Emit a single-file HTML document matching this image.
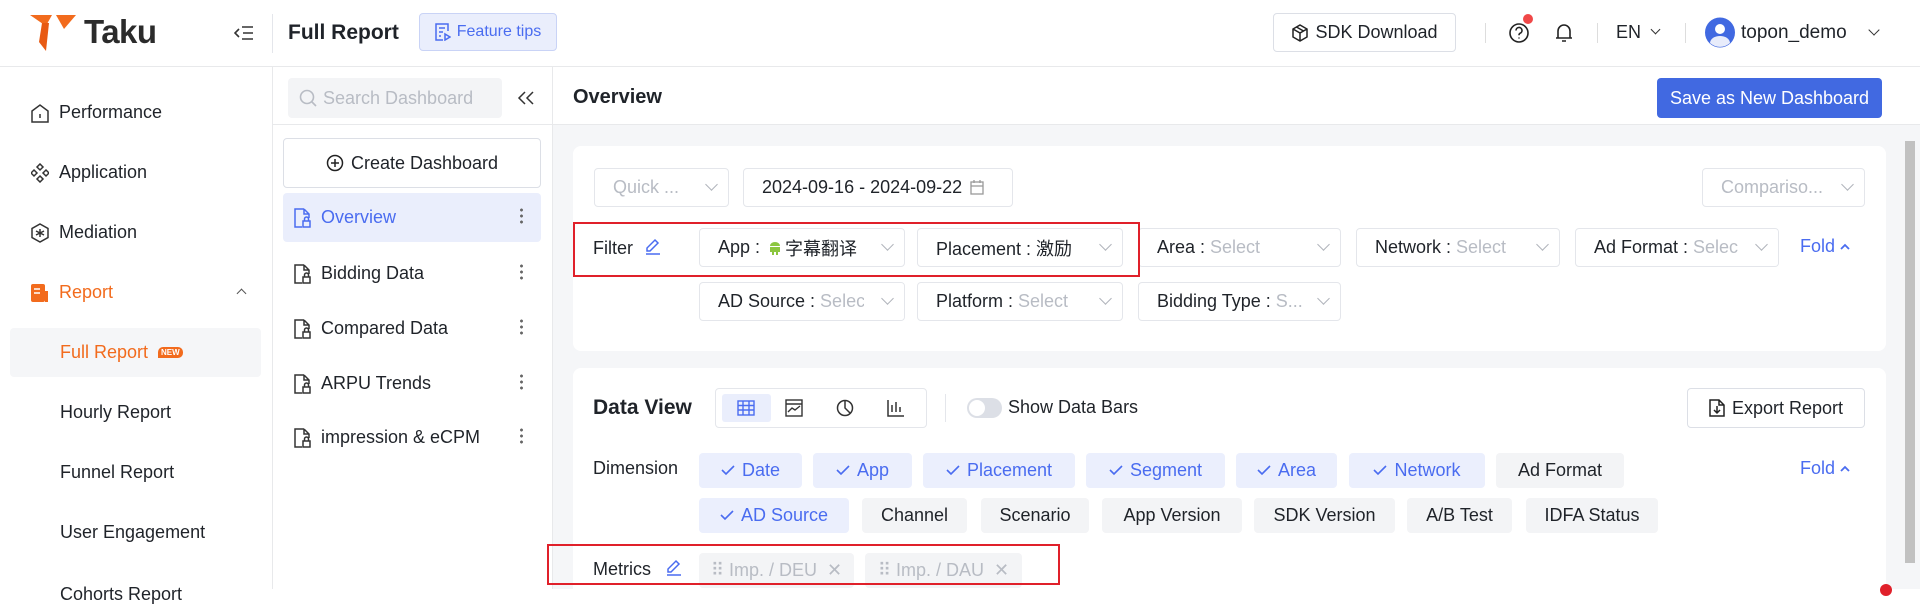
<!DOCTYPE html>
<html><head><meta charset="utf-8"><style>
*{box-sizing:border-box;margin:0;padding:0}
body{width:1920px;height:589px;overflow:hidden;background:#fff;font-family:"Liberation Sans","Noto Sans CJK SC",sans-serif;color:#1f2329;position:relative;font-size:18px}
.a{position:absolute}
.vc{display:flex;align-items:center}
.btn{border:1px solid #dcdfe6;border-radius:4px;background:#fff;display:flex;align-items:center;justify-content:center}
.sel{position:absolute;height:39px;border:1px solid #e4e6eb;border-radius:4px;background:#fff;display:flex;align-items:center;padding-left:18px;font-size:18px;white-space:nowrap;overflow:hidden}
.sel .ph{color:#b8bcc4}
.sel .cv{position:absolute;right:12px;top:11px;width:9px;height:9px;border-right:1.5px solid #b0b4bb;border-bottom:1.5px solid #b0b4bb;transform:rotate(45deg)}
.sel .mask{position:absolute;right:0;top:0;bottom:0;width:40px;background:#fff}
.chip{position:absolute;height:35px;border-radius:4px;display:flex;align-items:center;justify-content:center;font-size:18px;background:#f3f4f6;color:#1f2329}
.chip.on{background:#ebeffd;color:#4a6cf0}
.chip.on svg{margin-right:7px}
.nav{position:absolute;left:31px;font-size:18px;display:flex;align-items:center}
.nav svg{margin-right:10px}
.db{position:absolute;left:283px;width:258px;height:49px;display:flex;align-items:center;padding-left:11px;font-size:18px;border-radius:4px}
.db svg{margin-right:10px}
.db .dots{position:absolute;right:18px;top:14px;width:3px;height:18px;background:radial-gradient(circle,#666 1.3px,transparent 1.6px) 0 0/3px 6px}
.fold{position:absolute;left:1800px;color:#4a6cf0;display:flex;align-items:center}
</style></head><body>
<!-- header -->
<div class="a" style="left:0;top:0;width:1920px;height:67px;border-bottom:1px solid #e8e9eb"></div>
<svg class="a" style="left:30px;top:14px" width="46" height="37" viewBox="0 0 46 37"><path d="M0 1h22l-5 9h-4z" fill="#f26b1d"/><path d="M12 9h7l-3 28-7-9z" fill="#e85a13"/><path d="M26 1h20l-12 14z" fill="#f26b1d"/></svg>
<div class="a" style="left:84px;top:13px;font-size:33px;font-weight:bold;color:#2b2b2b;letter-spacing:-0.5px">Taku</div>
<svg class="a" style="left:234px;top:24px" width="20" height="18" viewBox="0 0 20 18" fill="none" stroke="#333" stroke-width="1.6"><path d="M5 5l-4 4 4 4M8 3h11M9 9h10M8 15h11"/></svg>
<div class="a" style="left:272px;top:14px;width:1px;height:39px;background:#e4e6eb"></div>
<div class="a" style="left:288px;top:21px;font-size:21px;font-weight:bold">Full Report</div>
<div class="a vc" style="left:419px;top:13px;width:138px;height:38px;background:#eaeefc;border:1px solid #c9d3f6;border-radius:4px;justify-content:center;color:#4a6cf0;font-size:16px"><svg width="16" height="18" viewBox="0 0 16 18" fill="none" stroke="#4a6cf0" stroke-width="1.5" style="margin-right:6px"><path d="M13 8V1H1v16h7M4 5h6M4 9h4M4 13h2M10 11l5 3-5 3z"/></svg>Feature tips</div>
<div class="a btn" style="left:1273px;top:13px;width:183px;height:39px;font-size:18px"><svg width="18" height="18" viewBox="0 0 18 18" fill="none" stroke="#222" stroke-width="1.5" style="margin-right:6px"><path d="M9 1l7 4v8l-7 4-7-4V5zM2 5l7 4 7-4M9 9v8M5.5 3l7 4"/></svg>SDK Download</div>
<div class="a" style="left:1485px;top:23px;width:1px;height:20px;background:#ddd"></div>
<svg class="a" style="left:1508px;top:22px" width="22" height="22" viewBox="0 0 22 22" fill="none" stroke="#222" stroke-width="1.6"><circle cx="11" cy="11" r="9"/><path d="M8 8.5a3 3 0 1 1 4 2.8c-.8.4-1 1-1 2M11 15.5v1"/></svg>
<div class="a" style="left:1523px;top:14px;width:10px;height:10px;border-radius:50%;background:#f04848"></div>
<svg class="a" style="left:1554px;top:22px" width="20" height="22" viewBox="0 0 20 22" fill="none" stroke="#222" stroke-width="1.6"><path d="M4 16V9a6 6 0 0 1 12 0v7M2 16h16M8 19h4"/></svg>
<div class="a" style="left:1597px;top:23px;width:1px;height:20px;background:#ddd"></div>
<div class="a" style="left:1616px;top:22px;font-size:18px">EN</div>
<div class="a" style="left:1652px;top:26px;width:7px;height:7px;border-right:1.5px solid #333;border-bottom:1.5px solid #333;transform:rotate(45deg)"></div>
<div class="a" style="left:1685px;top:23px;width:1px;height:20px;background:#ddd"></div>
<svg class="a" style="left:1705px;top:17px" width="30" height="31" viewBox="0 0 30 31"><circle cx="15" cy="15.5" r="15" fill="#4169e1"/><circle cx="15" cy="12" r="5" fill="#fff"/><path d="M5 26a10 7 0 0 1 20 0a15 15 0 0 1-20 0z" fill="#e8ecfb"/></svg>
<div class="a" style="left:1741px;top:22px;font-size:19px">topon_demo</div>
<div class="a" style="left:1870px;top:26px;width:8px;height:8px;border-right:1.5px solid #333;border-bottom:1.5px solid #333;transform:rotate(45deg)"></div>

<!-- left nav -->
<div class="a" style="left:272px;top:67px;width:1px;height:522px;background:#e8e9eb"></div>
<div class="nav" style="top:102px"><svg width="18" height="20" viewBox="0 0 18 20" fill="none" stroke="#333" stroke-width="1.5"><path d="M1 8l8-6 8 6v11H1zM9 11v4"/></svg>Performance</div>
<div class="nav" style="top:162px"><svg width="18" height="20" viewBox="0 0 18 20" fill="none" stroke="#333" stroke-width="1.5"><path d="M9 1l3 3-3 3-3-3zM9 13l3 3-3 3-3-3zM3 7l3 3-3 3-3-3zM15 7l3 3-3 3-3-3z"/></svg>Application</div>
<div class="nav" style="top:222px"><svg width="18" height="20" viewBox="0 0 18 20" fill="none" stroke="#333" stroke-width="1.5"><path d="M9 1l8 4.5v9L9 19l-8-4.5v-9zM9 6v8M5 8l8 4M13 8l-8 4"/></svg>Mediation</div>
<div class="nav" style="top:282px;color:#f26b1d"><svg width="18" height="20" viewBox="0 0 18 20"><rect x="0" y="1" width="14" height="18" rx="2" fill="#f26b1d"/><path d="M3 6h6M3 10h6" stroke="#fff" stroke-width="1.6"/><rect x="14" y="8" width="3" height="11" fill="#f26b1d"/></svg>Report</div>
<div class="a" style="left:238px;top:290px;width:7px;height:7px;border-left:1.3px solid #555;border-top:1.3px solid #555;transform:rotate(45deg)"></div>
<div class="a" style="left:10px;top:328px;width:251px;height:49px;background:#f5f6f8;border-radius:4px"></div>
<div class="a" style="left:60px;top:342px;color:#f26b1d;font-size:18px">Full Report</div>
<div class="a" style="left:158px;top:347px;background:#f26b1d;color:#fff;font-size:8px;font-weight:bold;padding:1px 3px;border-radius:5px 5px 5px 0">NEW</div>
<div class="a" style="left:60px;top:402px">Hourly Report</div>
<div class="a" style="left:60px;top:462px">Funnel Report</div>
<div class="a" style="left:60px;top:522px">User Engagement</div>
<div class="a" style="left:60px;top:584px">Cohorts Report</div>

<!-- dashboard list -->
<div class="a" style="left:552px;top:67px;width:1px;height:522px;background:#e8e9eb"></div>
<div class="a" style="left:272px;top:124px;width:1648px;height:1px;background:#e8e9eb"></div>
<div class="a vc" style="left:288px;top:78px;width:214px;height:40px;background:#f3f4f6;border-radius:4px;padding-left:11px;color:#b8bcc4;font-size:18px"><svg width="18" height="18" viewBox="0 0 18 18" fill="none" stroke="#b8bcc4" stroke-width="1.6" style="margin-right:6px"><circle cx="8" cy="8" r="6.5"/><path d="M13 13l4 4"/></svg>Search Dashboard</div>
<svg class="a" style="left:517px;top:91px" width="18" height="14" viewBox="0 0 18 14" fill="none" stroke="#333" stroke-width="1.5"><path d="M8 1L2 7l6 6M16 1l-6 6 6 6"/></svg>
<div class="a btn" style="left:283px;top:138px;width:258px;height:50px;font-size:18px"><svg width="18" height="18" viewBox="0 0 18 18" fill="none" stroke="#222" stroke-width="1.5" style="margin-right:7px"><circle cx="9" cy="9" r="7.5"/><path d="M9 5v8M5 9h8"/></svg>Create Dashboard</div>
<div class="db" style="top:193px;background:#eaeefc;color:#4a6cf0"><svg width="17" height="20" viewBox="0 0 17 20" fill="none" stroke="#4a6cf0" stroke-width="1.5"><path d="M10 1H1v18h7M10 1l5 5v4M10 1v5h5"/><rect x="9" y="13" width="7" height="6"/><path d="M10.5 13v-2a2 2 0 0 1 4 0v2"/></svg>Overview<span class="dots"></span></div>
<div class="db" style="top:249px"><svg width="17" height="20" viewBox="0 0 17 20" fill="none" stroke="#333" stroke-width="1.5"><path d="M10 1H1v18h7M10 1l5 5v4M10 1v5h5"/><rect x="9" y="13" width="7" height="6"/><path d="M10.5 13v-2a2 2 0 0 1 4 0v2"/></svg>Bidding Data<span class="dots"></span></div>
<div class="db" style="top:304px"><svg width="17" height="20" viewBox="0 0 17 20" fill="none" stroke="#333" stroke-width="1.5"><path d="M10 1H1v18h7M10 1l5 5v4M10 1v5h5"/><rect x="9" y="13" width="7" height="6"/><path d="M10.5 13v-2a2 2 0 0 1 4 0v2"/></svg>Compared Data<span class="dots"></span></div>
<div class="db" style="top:359px"><svg width="17" height="20" viewBox="0 0 17 20" fill="none" stroke="#333" stroke-width="1.5"><path d="M10 1H1v18h7M10 1l5 5v4M10 1v5h5"/><rect x="9" y="13" width="7" height="6"/><path d="M10.5 13v-2a2 2 0 0 1 4 0v2"/></svg>ARPU Trends<span class="dots"></span></div>
<div class="db" style="top:413px"><svg width="17" height="20" viewBox="0 0 17 20" fill="none" stroke="#333" stroke-width="1.5"><path d="M10 1H1v18h7M10 1l5 5v4M10 1v5h5"/><rect x="9" y="13" width="7" height="6"/><path d="M10.5 13v-2a2 2 0 0 1 4 0v2"/></svg>impression &amp; eCPM<span class="dots"></span></div>

<!-- main -->
<div class="a" style="left:573px;top:86px;font-size:20px;font-weight:bold">Overview</div>
<div class="a vc" style="left:1657px;top:78px;width:225px;height:40px;background:#4169e1;border-radius:4px;color:#fff;justify-content:center;font-size:18px">Save as New Dashboard</div>
<div class="a" style="left:553px;top:125px;width:1367px;height:464px;background:#f5f6f8"></div>
<div class="a" style="left:1905px;top:141px;width:10px;height:422px;background:#c1c1c1"></div>

<!-- card 1 -->
<div class="a" style="left:573px;top:146px;width:1313px;height:205px;background:#fff;border-radius:8px"></div>
<div class="sel" style="left:594px;top:168px;width:135px;color:#b8bcc4">Quick ...<span class="cv"></span></div>
<div class="sel" style="left:743px;top:168px;width:270px;padding-left:18px">2024-09-16 - 2024-09-22<svg width="14" height="15" viewBox="0 0 14 15" fill="none" stroke="#999" stroke-width="1.3" style="margin-left:8px"><rect x="1" y="2" width="12" height="12"/><path d="M1 6h12M4 0v3M10 0v3"/></svg></div>
<div class="sel" style="left:1702px;top:168px;width:163px;color:#b8bcc4">Compariso...<span class="cv"></span></div>
<div class="a" style="left:593px;top:238px">Filter</div>
<svg class="a" style="left:645px;top:238px" width="16" height="17" viewBox="0 0 16 17" fill="none" stroke="#4a6cf0" stroke-width="1.5"><path d="M10 2l3 3-8 8H2v-3zM1 16h14"/></svg>
<div class="sel" style="left:699px;top:228px;width:206px">App :&nbsp;<svg width="12" height="14" viewBox="0 0 12 14" style="margin:0 4px"><path d="M1 5a5 4 0 0 1 10 0zM1 6h10v5H1zM3 11h2v3H3zM7 11h2v3H7z" fill="#8cc63f"/></svg>字幕翻译<span class="cv"></span></div>
<div class="sel" style="left:917px;top:228px;width:206px">Placement : 激励<span class="cv"></span></div>
<div class="sel" style="left:1138px;top:228px;width:203px">Area :&nbsp;<span class="ph">Select</span><span class="cv"></span></div>
<div class="sel" style="left:1356px;top:228px;width:204px">Network :&nbsp;<span class="ph">Select</span><span class="cv"></span></div>
<div class="sel" style="left:1575px;top:228px;width:204px">Ad Format :&nbsp;<span class="ph">Select</span><span class="mask"></span><span class="cv"></span></div>
<div class="fold" style="top:236px">Fold<svg width="12" height="8" viewBox="0 0 12 8" fill="none" stroke="#4a6cf0" stroke-width="1.8" style="margin-left:4px"><path d="M2 6l4-4 4 4"/></svg></div>
<div class="sel" style="left:699px;top:282px;width:206px">AD Source :&nbsp;<span class="ph">Select</span><span class="mask"></span><span class="cv"></span></div>
<div class="sel" style="left:917px;top:282px;width:206px">Platform :&nbsp;<span class="ph">Select</span><span class="cv"></span></div>
<div class="sel" style="left:1138px;top:282px;width:203px">Bidding Type :&nbsp;<span class="ph">S...</span><span class="cv"></span></div>
<div class="a" style="left:573px;top:222px;width:567px;height:55px;border:2px solid #e0202a"></div>

<!-- card 2 -->
<div class="a" style="left:573px;top:368px;width:1313px;height:230px;background:#fff;border-radius:8px"></div>
<div class="a" style="left:593px;top:396px;font-size:21px;font-weight:bold">Data View</div>
<div class="a" style="left:715px;top:388px;width:212px;height:40px;border:1px solid #e4e6eb;border-radius:4px"></div>
<div class="a" style="left:722px;top:394px;width:49px;height:28px;background:#eaeefc;border-radius:3px"></div>
<svg class="a" style="left:737px;top:400px" width="18" height="16" viewBox="0 0 18 16" fill="none" stroke="#4a6cf0" stroke-width="1.4"><rect x="1" y="1" width="16" height="14"/><path d="M1 5.5h16M1 10h16M6 1v14M12 1v14"/></svg>
<svg class="a" style="left:785px;top:399px" width="18" height="18" viewBox="0 0 18 18" fill="none" stroke="#333" stroke-width="1.4"><rect x="1" y="1" width="16" height="16"/><path d="M1 5h16M3 13l4-4 3 2 5-4"/></svg>
<svg class="a" style="left:836px;top:399px" width="18" height="18" viewBox="0 0 18 18" fill="none" stroke="#333" stroke-width="1.5"><circle cx="9" cy="9" r="7.5"/><path d="M9 1.5V9l5 5"/></svg>
<svg class="a" style="left:887px;top:399px" width="18" height="18" viewBox="0 0 18 18" fill="none" stroke="#333" stroke-width="1.5"><path d="M1 1v16h16M5 13V6M9 13V3M13 13V8"/></svg>
<div class="a" style="left:945px;top:394px;width:1px;height:28px;background:#e4e6eb"></div>
<div class="a" style="left:967px;top:398px;width:35px;height:20px;border-radius:10px;background:#dcdfe6"></div>
<div class="a" style="left:969px;top:400px;width:16px;height:16px;border-radius:50%;background:#fff"></div>
<div class="a" style="left:1008px;top:397px">Show Data Bars</div>
<div class="a btn" style="left:1687px;top:388px;width:178px;height:40px;font-size:18px"><svg width="16" height="18" viewBox="0 0 16 18" fill="none" stroke="#222" stroke-width="1.5" style="margin-right:7px"><path d="M10 1H1v16h14V6zM10 1v5h5M8 7v7M5 11l3 3 3-3"/></svg>Export Report</div>
<div class="a" style="left:593px;top:458px">Dimension</div>
<div class="chip on" style="left:699px;top:453px;width:103px"><svg width="14" height="11" viewBox="0 0 14 11" fill="none" stroke="#4a6cf0" stroke-width="1.6"><path d="M1 5l4 4 8-8"/></svg>Date</div>
<div class="chip on" style="left:813px;top:453px;width:99px"><svg width="14" height="11" viewBox="0 0 14 11" fill="none" stroke="#4a6cf0" stroke-width="1.6"><path d="M1 5l4 4 8-8"/></svg>App</div>
<div class="chip on" style="left:923px;top:453px;width:152px"><svg width="14" height="11" viewBox="0 0 14 11" fill="none" stroke="#4a6cf0" stroke-width="1.6"><path d="M1 5l4 4 8-8"/></svg>Placement</div>
<div class="chip on" style="left:1086px;top:453px;width:139px"><svg width="14" height="11" viewBox="0 0 14 11" fill="none" stroke="#4a6cf0" stroke-width="1.6"><path d="M1 5l4 4 8-8"/></svg>Segment</div>
<div class="chip on" style="left:1236px;top:453px;width:101px"><svg width="14" height="11" viewBox="0 0 14 11" fill="none" stroke="#4a6cf0" stroke-width="1.6"><path d="M1 5l4 4 8-8"/></svg>Area</div>
<div class="chip on" style="left:1349px;top:453px;width:136px"><svg width="14" height="11" viewBox="0 0 14 11" fill="none" stroke="#4a6cf0" stroke-width="1.6"><path d="M1 5l4 4 8-8"/></svg>Network</div>
<div class="chip" style="left:1496px;top:453px;width:128px">Ad Format</div>
<div class="fold" style="top:458px">Fold<svg width="12" height="8" viewBox="0 0 12 8" fill="none" stroke="#4a6cf0" stroke-width="1.8" style="margin-left:4px"><path d="M2 6l4-4 4 4"/></svg></div>
<div class="chip on" style="left:699px;top:498px;width:150px"><svg width="14" height="11" viewBox="0 0 14 11" fill="none" stroke="#4a6cf0" stroke-width="1.6"><path d="M1 5l4 4 8-8"/></svg>AD Source</div>
<div class="chip" style="left:862px;top:498px;width:105px">Channel</div>
<div class="chip" style="left:981px;top:498px;width:108px">Scenario</div>
<div class="chip" style="left:1102px;top:498px;width:140px">App Version</div>
<div class="chip" style="left:1254px;top:498px;width:141px">SDK Version</div>
<div class="chip" style="left:1407px;top:498px;width:105px">A/B Test</div>
<div class="chip" style="left:1526px;top:498px;width:132px">IDFA Status</div>
<div class="a" style="left:593px;top:559px">Metrics</div>
<svg class="a" style="left:666px;top:559px" width="16" height="17" viewBox="0 0 16 17" fill="none" stroke="#4a6cf0" stroke-width="1.5"><path d="M10 2l3 3-8 8H2v-3zM1 16h14"/></svg>
<div class="chip" style="left:699px;top:553px;width:155px;color:#b8bcc4">⠿ Imp. / DEU &nbsp;✕</div>
<div class="chip" style="left:865px;top:553px;width:157px;color:#b8bcc4">⠿ Imp. / DAU &nbsp;✕</div>
<div class="a" style="left:547px;top:544px;width:513px;height:41px;border:2px solid #e0202a"></div>
<div class="a" style="left:1880px;top:584px;width:12px;height:12px;border-radius:50%;background:#e0202a"></div>
</body></html>
